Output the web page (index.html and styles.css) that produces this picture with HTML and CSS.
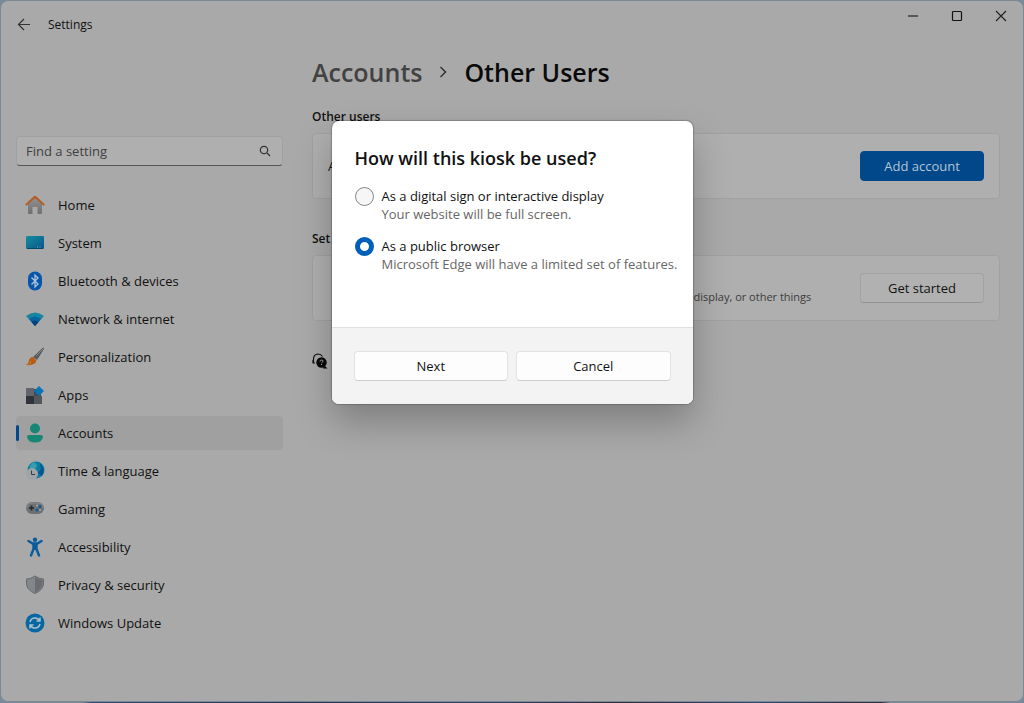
FILE: index.html
```html
<!DOCTYPE html>
<html lang="en">
<head>
  <meta charset="UTF-8">
  <meta name="viewport" content="width=device-width, initial-scale=1.0">
  <title>Settings</title>
  <link rel="stylesheet" href="styles.css">
</head>
<body>
  <div class="window">
    <header class="titlebar">
      <button class="back-button" aria-label="Back">
        <svg width="14" height="14" viewBox="0 0 14 14" fill="none" stroke="#333" stroke-width="1.2"><path d="M13 6.500H2M7 1L1.500 6.500L7 12"/></svg>
      </button>
      <span class="window-title">Settings</span>
      <div class="window-buttons">
        <button aria-label="Minimize"><svg width="12" height="12" viewBox="0 0 12 12" stroke="#222" stroke-width="1.2"><path d="M1 6H11"/></svg></button>
        <button aria-label="Maximize"><svg width="12" height="12" viewBox="0 0 12 12" fill="none" stroke="#111" stroke-width="1.2"><rect x="1.5" y="1.5" width="9" height="9" rx="1"/></svg></button>
        <button aria-label="Close"><svg width="12" height="12" viewBox="0 0 12 12" stroke="#222" stroke-width="1.2"><path d="M1 1L11 11M11 1L1 11"/></svg></button>
      </div>
    </header>

    <div class="layout">
      <aside class="sidebar">
        <div class="search">
          <input type="text" placeholder="Find a setting" aria-label="Find a setting">
          <svg width="12" height="12" viewBox="0 0 12 12" fill="none" stroke="#333" stroke-width="1.2"><circle cx="5" cy="5" r="3.7"/><path d="M8 8L11 11"/></svg>
        </div>

        <nav class="nav">
          <a href="#" class="nav-item">
            <svg width="20" height="20" viewBox="0 0 20 20"><defs><linearGradient id="wall" x2="0" y2="1"><stop stop-color="#909090"/><stop offset="1" stop-color="#707070"/></linearGradient><linearGradient id="roof" x2="0" y2="1"><stop stop-color="#b8571f"/><stop offset="1" stop-color="#a3632f"/></linearGradient></defs><path d="M3 9L10 3L17 9V18Q17 19 16 19H12.5V12H7.5V19H4Q3 19 3 18Z" fill="url(#wall)"/><path d="M1.500 9.500L10 1.800L18.500 9.500" fill="none" stroke="url(#roof)" stroke-width="2.200" stroke-linecap="round" stroke-linejoin="round"/></svg>
            Home
          </a>
          <a href="#" class="nav-item">
            <svg width="20" height="20" viewBox="0 0 20 20"><defs><linearGradient id="screen" x2="1" y2="1"><stop stop-color="#168e9f"/><stop offset="1" stop-color="#07558b"/></linearGradient></defs><rect x="1" y="3" width="18" height="13" rx="1.200" fill="url(#screen)"/><path d="M2 15.500H18" stroke="#064869"/><path d="M12 14H13M14.500 14H15.500" stroke="#76a9ba"/></svg>
            System
          </a>
          <a href="#" class="nav-item">
            <svg width="20" height="20" viewBox="0 0 20 20"><rect x="3" y="0.500" width="14" height="19" rx="7" fill="#0856a9"/><path d="M6.500 6.500L13 13L10 16V4L13 7L6.500 13.500" fill="none" stroke="#afc4d8" stroke-width="1.300"/></svg>
            Bluetooth &amp; devices
          </a>
          <a href="#" class="nav-item">
            <svg width="20" height="20" viewBox="0 0 20 20"><path d="M1 7Q10 0 19 7L10 17Z" fill="#1685a0"/><path d="M4 10Q10 5 16 10L10 17Z" fill="#0764a1"/><path d="M6.500 13Q10 10 13.500 13L10 17Z" fill="#063f7c"/></svg>
            Network &amp; internet
          </a>
          <a href="#" class="nav-item">
            <svg width="20" height="20" viewBox="0 0 20 20"><path d="M8 10L17.500 1Q19.500 0 19 2L12 13Z" fill="#545b60"/><path d="M11 9L18.500 1.500" stroke="#84888a"/><path d="M8 10L11.500 13.500Q10 19 1 18Q4 16 4 13Q5 10 8 10Z" fill="#b75c16"/><path d="M2 18Q6 17 6 14" fill="none" stroke="#c28128"/></svg>
            Personalization
          </a>
          <a href="#" class="nav-item">
            <svg width="20" height="20" viewBox="0 0 20 20"><rect x="1" y="3" width="8" height="8" fill="#62666b"/><rect x="1" y="11" width="8" height="8" fill="#30343a"/><rect x="9" y="11" width="8" height="8" fill="#52575d"/><rect x="9" y="4" width="7" height="7" fill="#414b52"/><path d="M14 1L19 6L14 11L9 6Z" fill="#0875b4"/></svg>
            Apps
          </a>
          <a href="#" class="nav-item active">
            <svg width="20" height="20" viewBox="0 0 20 20"><circle cx="10" cy="5.500" r="5" fill="#178773"/><path d="M4 12H16Q18 12 18 14Q17 19.500 10 19.500Q3 19.500 2 14Q2 12 4 12Z" fill="#178773"/></svg>
            Accounts
          </a>
          <a href="#" class="nav-item">
            <svg width="20" height="20" viewBox="0 0 20 20"><circle cx="11" cy="9" r="8.500" fill="#087ca2"/><path d="M8 1Q14 3 11 7L8 9L4 6Z" fill="#369fae"/><path d="M15 2Q21 8 17 15L13 12L16 8Z" fill="#075392"/><circle cx="7" cy="13" r="6" fill="#9fa4a8"/><path d="M6.500 9.500V13.500H10" fill="none" stroke="#363b40"/></svg>
            Time &amp; language
          </a>
          <a href="#" class="nav-item">
            <svg width="20" height="20" viewBox="0 0 20 20"><rect x="1" y="3" width="18" height="12" rx="6" fill="#6c7176"/><path d="M2 9Q2 4 7 4H13Q18 4 18 9" fill="none" stroke="#898d90"/><path d="M6.500 6.500V11.500M4 9H9" stroke="#25292e" stroke-width="1.600"/><circle cx="12" cy="11" r="1.600" fill="#195a8c"/><circle cx="15" cy="7.500" r="1.600" fill="#195a8c"/><circle cx="12" cy="6.500" r="1" fill="#a5aaad"/><circle cx="15" cy="11" r="1" fill="#a5aaad"/></svg>
            Gaming
          </a>
          <a href="#" class="nav-item">
            <svg width="20" height="20" viewBox="0 0 20 20"><circle cx="10" cy="2.800" r="2.200" fill="#075c9c"/><path d="M3.500 4L7.500 6.500H12.500L16.500 4M8.500 7V12L6 18.500M11.500 7V12L14 18.500" fill="none" stroke="#075c9c" stroke-width="2.400" stroke-linecap="round" stroke-linejoin="round"/><path d="M8 6H12V13H8Z" fill="#075c9c"/></svg>
            Accessibility
          </a>
          <a href="#" class="nav-item">
            <svg width="20" height="20" viewBox="0 0 20 20"><path d="M10 1Q14 4 18.500 4V9Q18 15 10 18.500Q2 15 1.500 9V4Q6 4 10 1Z" fill="#83868a" stroke="#676a6e"/><path d="M10 2Q14 5 17.500 5V9Q17 14 10 17.500Z" fill="#696c70"/></svg>
            Privacy &amp; security
          </a>
          <a href="#" class="nav-item">
            <svg width="20" height="20" viewBox="0 0 20 20"><circle cx="10" cy="10" r="9.500" fill="#0867a2"/><path d="M5 9Q6 5 10 5Q13 5 15 8M15 4.500V8H11.500M15 11Q14 15 10 15Q7 15 5 12M5 15.500V12H8.500" fill="none" stroke="#a9c1cd" stroke-width="1.500"/></svg>
            Windows Update
          </a>
        </nav>
      </aside>

      <main class="content">
        <h1 class="breadcrumb">
          <a href="#">Accounts</a>
          <svg width="8" height="12" viewBox="0 0 8 12" fill="none" stroke="#333" stroke-width="1.500"><path d="M1.500 1L6.500 6L1.500 11"/></svg>
          <span>Other Users</span>
        </h1>

        <section class="section">
          <h2>Other users</h2>
          <div class="card">
            <p class="card-title">Add other user</p>
            <button class="button primary">Add account</button>
          </div>
        </section>

        <section class="section">
          <h2>Set up a kiosk</h2>
          <div class="card">
            <svg class="card-icon" width="18" height="18" viewBox="0 0 18 18" fill="none" stroke="#222"><rect x="1.500" y="2.500" width="15" height="10" rx="1"/><path d="M9 13V16M5 16.500H13"/></svg>
            <div class="card-text">
              <p class="card-title">Kiosk</p>
              <p class="card-note">Turn this device into a kiosk to use as a digital sign, interactive display, or other things</p>
            </div>
            <button class="button">Get started</button>
          </div>
        </section>

        <a href="#" class="help">
          <svg width="16" height="16" viewBox="0 0 16 16"><path d="M1.500 10V6Q1.500 1.500 6 1Q9 1 10.500 3.500M1 7V10H3" fill="none" stroke="#111" stroke-width="1.200"/><circle cx="9.500" cy="9.500" r="5.200" fill="#080808"/><path d="M12 12L15.500 15.500H11Z" fill="#080808"/><path d="M8 8.500Q8 7 9.500 7Q11 7 11 8.300Q11 9 9.500 10M9.500 11V12" fill="none" stroke="#a9a9a9"/></svg>
          Get help
        </a>
      </main>
    </div>

    <div class="overlay">
      <form class="dialog" role="dialog" aria-labelledby="dialogTitle">
        <div class="dialog-body">
          <h2 id="dialogTitle">How will this kiosk be used?</h2>
          <label class="option">
            <input type="radio" name="usage">
            <span class="option-text">As a digital sign or interactive display<small>Your website will be full screen.</small></span>
          </label>
          <label class="option">
            <input type="radio" name="usage" checked>
            <span class="option-text">As a public browser<small>Microsoft Edge will have a limited set of features.</small></span>
          </label>
        </div>
        <div class="dialog-footer">
          <button type="button">Next</button>
          <button type="button">Cancel</button>
        </div>
      </form>
    </div>
  </div>
</body>
</html>
```

FILE: styles.css
```css
* {
  margin: 0;
  padding: 0;
  box-sizing: border-box;
}

body {
  background: linear-gradient(90deg, #78899a 8%, #284c7c 9%, #23365c 30%, #28466f 48%, #30283d 60%, #284c7c 74%, #302a3a 86%, #78899a 87%);
  font-family: "Open Sans", "Noto Sans", sans-serif;
  font-size: 13px;
  line-height: 18px;
  color: #111;
}

button,
input {
  font: inherit;
  color: inherit;
}

a {
  color: inherit;
  text-decoration: none;
}

.window {
  position: relative;
  min-height: calc(100vh - 1px);
  background-color: #a9a9a9;
  border: 1px solid #7b8994;
  border-radius: 8px;
}

/* Title bar */
.titlebar {
  display: flex;
  height: 48px;
  padding-left: 16px;
}

.back-button,
.window-buttons button {
  border: none;
  background: none;
}

.back-button svg {
  display: block;
}

.window-title {
  align-self: center;
  margin-left: 17px;
  font-size: 12px;
}

.window-buttons {
  display: flex;
  height: 30px;
  margin-left: auto;
}

.window-buttons button {
  display: flex;
  align-items: center;
  justify-content: center;
  width: 44px;
}

.layout {
  display: grid;
  grid-template-columns: 267px 1fr;
  column-gap: 29px;
  padding: 0 23px 0 15px;
}

/* Sidebar */
.sidebar {
  padding-top: 87px;
}

.search {
  display: flex;
  align-items: center;
  height: 30px;
  padding: 0 11px 0 9px;
  background-color: #afafaf;
  border: 1px solid #a1a1a1;
  border-bottom-color: #555;
  border-radius: 4px;
}

.search input {
  flex: 1;
  min-width: 0;
  border: none;
  outline: none;
  background: none;
}

.search input::placeholder {
  color: #414141;
  opacity: 1;
}

.nav {
  display: flex;
  flex-direction: column;
  gap: 4px;
  margin-top: 22px;
}

.nav-item {
  display: flex;
  align-items: center;
  gap: 13px;
  height: 34px;
  padding-left: 9px;
  border-radius: 4px;
}

.nav-item svg {
  flex: none;
}

.nav-item.active {
  padding-left: 0;
  background-color: #a0a0a0;
}

.nav-item.active::before {
  content: "";
  width: 3px;
  height: 16px;
  margin-right: -7px;
  border-radius: 2px;
  background-color: #00488a;
}

/* Content */
.content {
  min-width: 0;
  padding-top: 5px;
}

.breadcrumb {
  display: flex;
  align-items: center;
  gap: 17px;
  font-size: 25px;
  font-weight: 600;
  line-height: 36px;
  color: #0a0a0a;
}

.breadcrumb a {
  color: #424242;
}

.section {
  margin-top: 18px;
}

.section + .section {
  margin-top: 31px;
}

.section h2 {
  margin-bottom: 7px;
  font-size: 12px;
  font-weight: 600;
  line-height: 18px;
}

.card {
  display: flex;
  align-items: center;
  min-height: 66px;
  padding: 0 15px;
  background-color: #afafaf;
  border: 1px solid #a1a1a1;
  border-radius: 4px;
}

.card-icon {
  margin: 0 20px 0 8px;
}

.card-note {
  font-size: 11px;
  color: #3d3d3d;
}

.button {
  width: 124px;
  height: 30px;
  margin-left: auto;
  background-color: #b1b1b1;
  border: 1px solid #a2a2a2;
  border-bottom-color: #939393;
  border-radius: 4px;
}

.button.primary {
  background-color: #00488a;
  border-color: #00488a;
  color: #b6c5d4;
}

.help {
  display: inline-flex;
  align-items: center;
  gap: 12px;
  margin-top: 31px;
}

/* Dialog */
.overlay {
  position: absolute;
  inset: 0;
  display: flex;
  align-items: flex-start;
  justify-content: center;
  padding-top: 120px;
}

.dialog {
  width: 361px;
  overflow: hidden;
  background-color: #fff;
  border-radius: 7px;
  box-shadow: 0 0 1px 1px rgba(0, 0, 0, 0.2), 0 18px 36px rgba(0, 0, 0, 0.25);
}

.dialog-body {
  min-height: 206px;
  padding: 24px 14px 24px 23px;
}

.dialog-body h2 {
  margin-bottom: 16px;
  font-size: 18px;
  font-weight: 600;
  line-height: 26px;
}

.option {
  display: flex;
  gap: 8px;
  margin-bottom: 14px;
}

.option input {
  appearance: none;
  flex: none;
  width: 19px;
  height: 19px;
  border: 1px solid #858585;
  border-radius: 50%;
  background-color: #f6f6f6;
}

.option input:checked {
  border: 5px solid #005fb8;
  background-color: #fff;
}

.option-text small {
  display: block;
  font-size: 13px;
  color: #676767;
}

.dialog-footer {
  display: grid;
  grid-template-columns: 1fr 1fr;
  gap: 8px;
  padding: 23px 22px;
  background-color: #f3f3f3;
  border-top: 1px solid #e1e1e1;
}

.dialog-footer button {
  height: 30px;
  background-color: #fdfdfd;
  border: 1px solid #e2e2e2;
  border-bottom-color: #cfcfcf;
  border-radius: 4px;
}
```
